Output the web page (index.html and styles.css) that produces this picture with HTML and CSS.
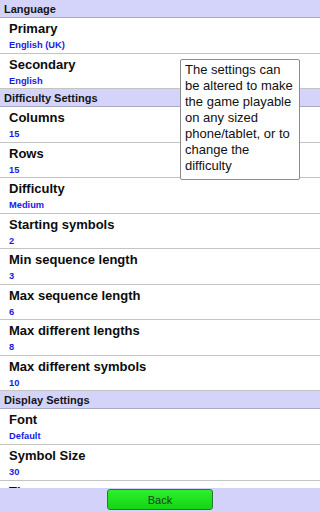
FILE: index.html
```html
<!DOCTYPE html>
<html>
<head>
<meta charset="utf-8">
<link rel="stylesheet" href="styles.css">
</head>
<body>
<div class="screen">
  <div class="list">
    <div class="header">Language</div>
    <div class="row"><div class="title">Primary</div><div class="value">English (UK)</div></div>
    <div class="row"><div class="title">Secondary</div><div class="value">English</div></div>
    <div class="header">Difficulty Settings</div>
    <div class="row"><div class="title">Columns</div><div class="value">15</div></div>
    <div class="row"><div class="title">Rows</div><div class="value">15</div></div>
    <div class="row"><div class="title">Difficulty</div><div class="value">Medium</div></div>
    <div class="row"><div class="title">Starting symbols</div><div class="value">2</div></div>
    <div class="row"><div class="title">Min sequence length</div><div class="value">3</div></div>
    <div class="row"><div class="title">Max sequence length</div><div class="value">6</div></div>
    <div class="row"><div class="title">Max different lengths</div><div class="value">8</div></div>
    <div class="row"><div class="title">Max different symbols</div><div class="value">10</div></div>
    <div class="header">Display Settings</div>
    <div class="row"><div class="title">Font</div><div class="value">Default</div></div>
    <div class="row"><div class="title">Symbol Size</div><div class="value">30</div></div>
    <div class="row"><div class="title">Theme</div><div class="value">Default</div></div>
    <div class="tooltip">The settings can<br>be altered to make<br>the game playable<br>on any sized<br>phone/tablet, or to<br>change the<br>difficulty</div>
  </div>
  <div class="footer"><button class="back">Back</button></div>
</div>
</body>
</html>
```

FILE: styles.css
```css
html, body {
  margin: 0;
  padding: 0;
  background: #ffffff;
}
.screen {
  width: 320px;
  height: 512px;
  display: flex;
  flex-direction: column;
  overflow: hidden;
  font-family: "Liberation Sans", Arial, sans-serif;
}
.list {
  position: relative;
  height: 488px;
  flex: none;
  overflow: hidden;
}
.header {
  box-sizing: border-box;
  height: 18px;
  background: #d4d4fa;
  border-bottom: 1px solid #a9a9c6;
  padding-left: 4px;
  font-size: 11px;
  font-weight: bold;
  line-height: 18px;
  color: #141414;
}
.row {
  box-sizing: border-box;
  height: 35.55px;
  border-bottom: 1px solid #c4c4c4;
  padding: 3px 0 0 9px;
}
.title {
  font-size: 13px;
  font-weight: bold;
  line-height: 15px;
  color: #0c0c0c;
}
.value {
  margin-top: 4px;
  font-size: 9.3px;
  font-weight: bold;
  line-height: 11px;
  color: #1a1ae6;
}
.tooltip {
  position: absolute;
  left: 180px;
  top: 59px;
  width: 111px;
  padding: 2px 3px 5px 4px;
  background: #ffffff;
  border: 1px solid #8c8c8c;
  border-radius: 2px;
  font-size: 13px;
  line-height: 16px;
  color: #111111;
  white-space: nowrap;
}
.footer {
  flex: 1;
  background: #d2d2fa;
  display: flex;
  justify-content: center;
  align-items: flex-start;
  padding-top: 1px;
}
.back {
  box-sizing: border-box;
  width: 106px;
  height: 21px;
  margin: 0;
  padding: 0;
  border: 1px solid #2b7a2b;
  border-radius: 3px;
  background: linear-gradient(#2cf02c, #14d414);
  font-family: "Liberation Sans", Arial, sans-serif;
  font-size: 11px;
  color: #1e3a1e;
}
```
